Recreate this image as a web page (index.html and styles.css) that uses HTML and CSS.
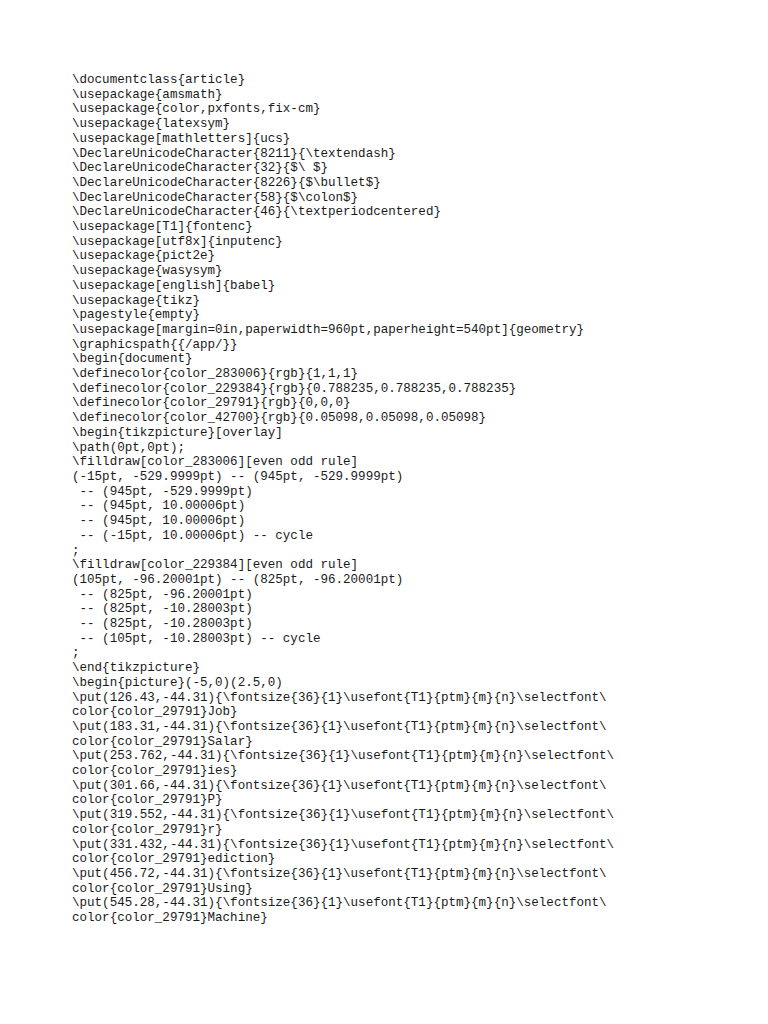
FILE: index.html
```html
<!DOCTYPE html>
<html>
<head>
<meta charset="utf-8">
<link rel="stylesheet" href="styles.css">
</head>
<body>
<pre class="doc">\documentclass{article}
\usepackage{amsmath}
\usepackage{color,pxfonts,fix-cm}
\usepackage{latexsym}
\usepackage[mathletters]{ucs}
\DeclareUnicodeCharacter{8211}{\textendash}
\DeclareUnicodeCharacter{32}{$\ $}
\DeclareUnicodeCharacter{8226}{$\bullet$}
\DeclareUnicodeCharacter{58}{$\colon$}
\DeclareUnicodeCharacter{46}{\textperiodcentered}
\usepackage[T1]{fontenc}
\usepackage[utf8x]{inputenc}
\usepackage{pict2e}
\usepackage{wasysym}
\usepackage[english]{babel}
\usepackage{tikz}
\pagestyle{empty}
\usepackage[margin=0in,paperwidth=960pt,paperheight=540pt]{geometry}
\graphicspath{{/app/}}
\begin{document}
\definecolor{color_283006}{rgb}{1,1,1}
\definecolor{color_229384}{rgb}{0.788235,0.788235,0.788235}
\definecolor{color_29791}{rgb}{0,0,0}
\definecolor{color_42700}{rgb}{0.05098,0.05098,0.05098}
\begin{tikzpicture}[overlay]
\path(0pt,0pt);
\filldraw[color_283006][even odd rule]
(-15pt, -529.9999pt) -- (945pt, -529.9999pt)
 -- (945pt, -529.9999pt)
 -- (945pt, 10.00006pt)
 -- (945pt, 10.00006pt)
 -- (-15pt, 10.00006pt) -- cycle
;
\filldraw[color_229384][even odd rule]
(105pt, -96.20001pt) -- (825pt, -96.20001pt)
 -- (825pt, -96.20001pt)
 -- (825pt, -10.28003pt)
 -- (825pt, -10.28003pt)
 -- (105pt, -10.28003pt) -- cycle
;
\end{tikzpicture}
\begin{picture}(-5,0)(2.5,0)
\put(126.43,-44.31){\fontsize{36}{1}\usefont{T1}{ptm}{m}{n}\selectfont\
color{color_29791}Job}
\put(183.31,-44.31){\fontsize{36}{1}\usefont{T1}{ptm}{m}{n}\selectfont\
color{color_29791}Salar}
\put(253.762,-44.31){\fontsize{36}{1}\usefont{T1}{ptm}{m}{n}\selectfont\
color{color_29791}ies}
\put(301.66,-44.31){\fontsize{36}{1}\usefont{T1}{ptm}{m}{n}\selectfont\
color{color_29791}P}
\put(319.552,-44.31){\fontsize{36}{1}\usefont{T1}{ptm}{m}{n}\selectfont\
color{color_29791}r}
\put(331.432,-44.31){\fontsize{36}{1}\usefont{T1}{ptm}{m}{n}\selectfont\
color{color_29791}ediction}
\put(456.72,-44.31){\fontsize{36}{1}\usefont{T1}{ptm}{m}{n}\selectfont\
color{color_29791}Using}
\put(545.28,-44.31){\fontsize{36}{1}\usefont{T1}{ptm}{m}{n}\selectfont\
color{color_29791}Machine}</pre>
</body>
</html>
```
FILE: styles.css
```css
html, body {
  margin: 0;
  padding: 0;
  background: #ffffff;
}
.doc {
  margin: 0;
  padding: 73px 0 0 72px;
  font-family: "Liberation Mono", monospace;
  font-size: 12.55px;
  line-height: 14.7px;
  color: #1a1a1a;
}
```
